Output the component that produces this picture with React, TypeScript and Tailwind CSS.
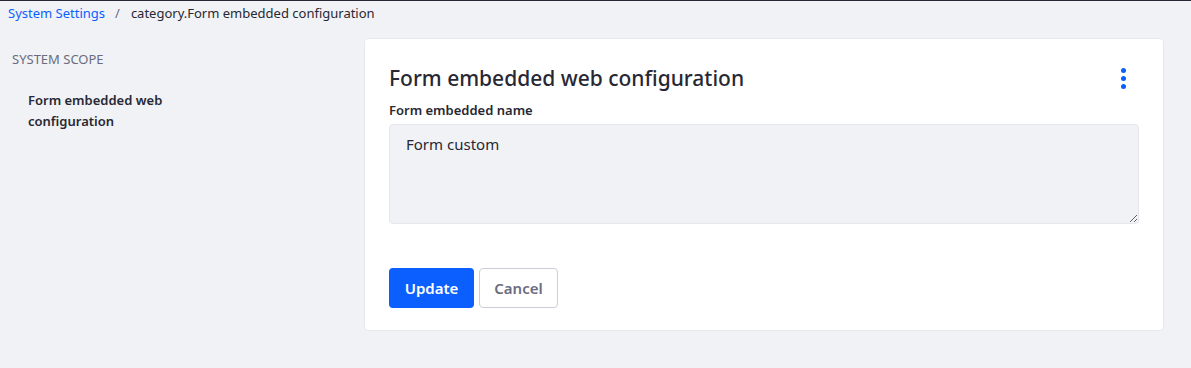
import { useState } from 'react';

export default function App() {
  const [name, setName] = useState('Form custom');

  return (
    <div className="min-h-[368px] bg-[#f1f2f5] border-t border-[#272833] font-['Noto_Sans',sans-serif] text-[#272833]">
      {/* breadcrumb */}
      <nav className="flex items-center h-[24px] px-2 text-[13px] leading-none">
        <a href="#" className="text-[#0b5fff]">System Settings</a>
        <span className="ml-[10px] mr-[11px] text-[#6b6c7e]">/</span>
        <span>category.Form embedded configuration</span>
      </nav>

      <div className="flex pt-[13px]">
        {/* sidebar */}
        <aside className="w-[364px] shrink-0 px-3">
          <div className="text-[13px] leading-[21px] text-[#6b6c7e] uppercase mt-[11px]">System Scope</div>
          <ul className="mt-[20px] pl-4">
            <li className="w-[190px] text-[13px] leading-[21px] font-semibold">Form embedded web configuration</li>
          </ul>
        </aside>

        {/* main card */}
        <main className="w-[800px] shrink-0">
          <div className="bg-white border border-[#e7e7ed] rounded-[4px] px-6 pt-[24px] pb-[22px]">
            <div className="flex items-start justify-between">
              <h1 className="text-[21px] leading-[28px] font-medium mt-[1px]">Form embedded web configuration</h1>
              <button className="mt-[5px] mr-[13px] flex flex-col gap-[3px] items-center" aria-label="Options">
                <span className="block w-[5px] h-[5px] rounded-full bg-[#0b5fff]" />
                <span className="block w-[5px] h-[5px] rounded-full bg-[#0b5fff]" />
                <span className="block w-[5px] h-[5px] rounded-full bg-[#0b5fff]" />
              </button>
            </div>
            <label className="block mt-[9px] text-[13px] leading-[18px] font-semibold">Form embedded name</label>
            <textarea
              value={name}
              onChange={(e) => setName(e.target.value)}
              className="mt-[5px] block w-full h-[100px] bg-[#f1f2f5] border border-[#e7e7ed] rounded-[4px] px-4 pt-[7px] pb-[8px] text-[15px] leading-[24px] text-[#272833] outline-none"
            />
            <div className="flex gap-[5px] mt-[44px]">
              <button className="h-[40px] w-[85px] rounded-[4px] bg-[#0b5fff] text-white text-[15px] font-semibold">Update</button>
              <button className="h-[40px] w-[79px] rounded-[4px] bg-white border border-[#cdced9] text-[#6b6c7e] text-[15px] font-semibold">Cancel</button>
            </div>
          </div>
        </main>
      </div>
    </div>
  );
}
